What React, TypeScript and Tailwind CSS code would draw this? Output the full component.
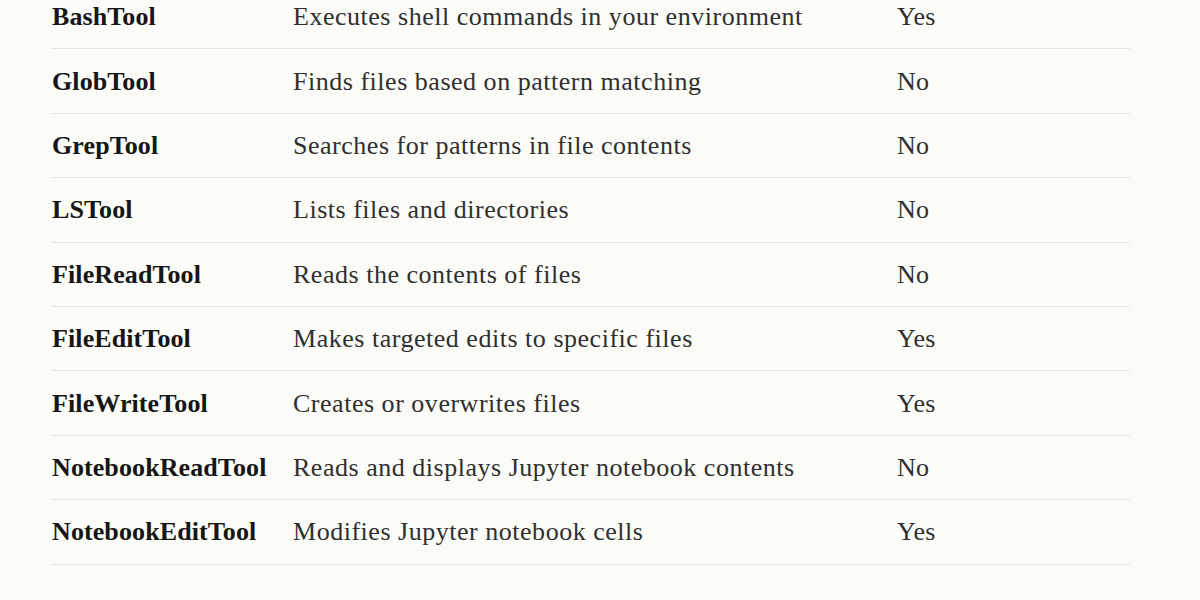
const rows = [
  { name: "BashTool", desc: "Executes shell commands in your environment", perm: "Yes" },
  { name: "GlobTool", desc: "Finds files based on pattern matching", perm: "No" },
  { name: "GrepTool", desc: "Searches for patterns in file contents", perm: "No" },
  { name: "LSTool", desc: "Lists files and directories", perm: "No" },
  { name: "FileReadTool", desc: "Reads the contents of files", perm: "No" },
  { name: "FileEditTool", desc: "Makes targeted edits to specific files", perm: "Yes" },
  { name: "FileWriteTool", desc: "Creates or overwrites files", perm: "Yes" },
  { name: "NotebookReadTool", desc: "Reads and displays Jupyter notebook contents", perm: "No" },
  { name: "NotebookEditTool", desc: "Modifies Jupyter notebook cells", perm: "Yes" },
];

export default function App() {
  return (
    <div className="h-[600px] w-[1200px] overflow-hidden bg-[#fbfbf7] font-['Liberation_Serif',serif]">
      <div className="mx-[51px] mt-[-15px] w-[1079px]">
        {rows.map((r) => (
          <div
            key={r.name}
            className="grid h-[64.4px] grid-cols-[242px_604px_1fr] items-center border-b border-[#e6e6e2] text-[26px]"
          >
            <span className="pl-px font-bold tracking-[0.1px] text-[#161616]">{r.name}</span>
            <span className="tracking-[0.52px] text-[#2f2f2f]">{r.desc}</span>
            <span className="tracking-[0.3px] text-[#2f2f2f]">{r.perm}</span>
          </div>
        ))}
      </div>
    </div>
  );
}
